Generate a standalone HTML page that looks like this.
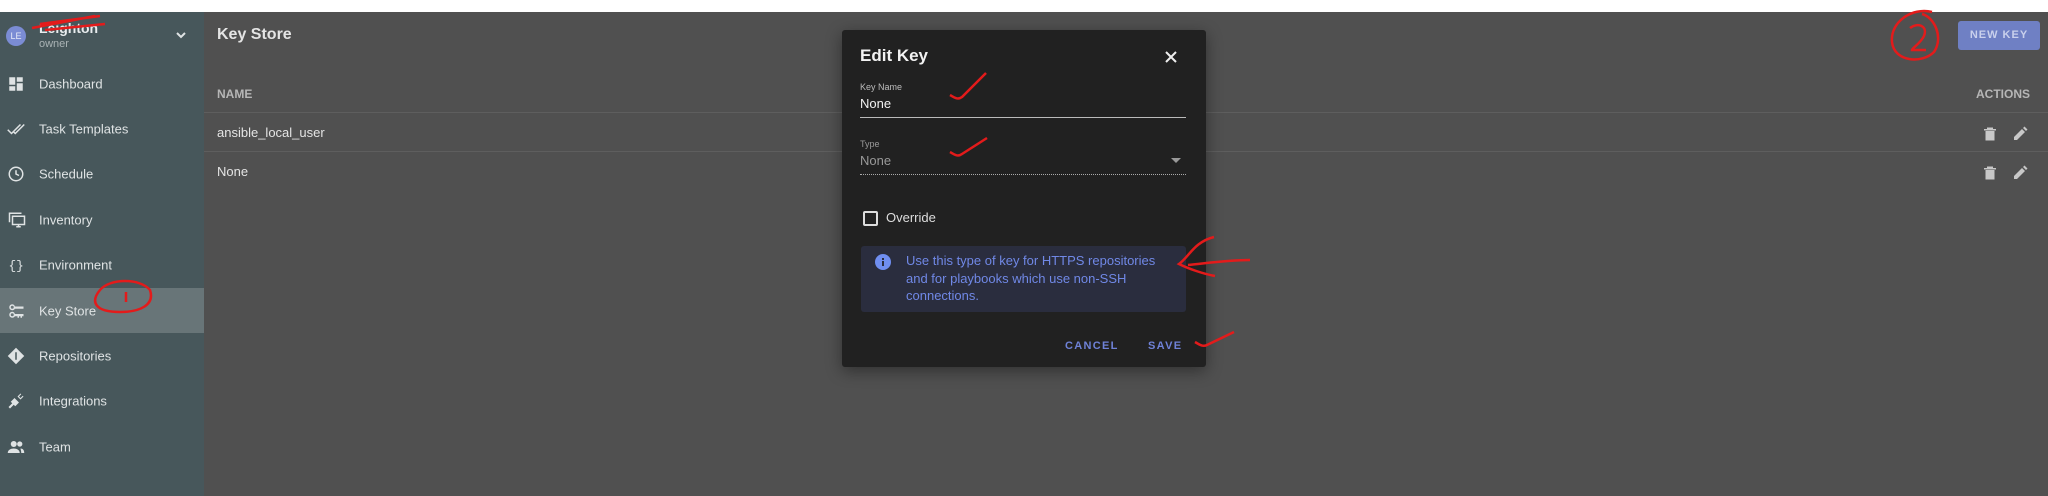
<!DOCTYPE html>
<html><head><meta charset="utf-8"><style>
*{margin:0;padding:0;box-sizing:border-box}
body{width:2048px;height:496px;overflow:hidden;background:#fff;font-family:"Liberation Sans",sans-serif;position:relative}
.abs{position:absolute}
#side{left:0;top:12px;width:204px;height:484px;background:#47575b}
#main{left:204px;top:12px;width:1844px;height:484px;background:#505050}
.item{position:absolute;left:0;width:204px;height:45px;color:#dfe3e4;font-size:13px}
.item span{position:absolute;left:39px;top:50%;transform:translateY(-50%)}
.item svg{position:absolute;left:7px;top:50%;transform:translateY(-50%)}
.t{position:absolute;white-space:nowrap}
</style></head><body>
<div id="side" class="abs"></div>
<div id="main" class="abs"></div>
<div class="abs" style="left:0;top:288px;width:204px;height:45px;background:#687578"></div>
<div class="abs" style="left:6px;top:26px;width:20px;height:20px;border-radius:50%;background:#7b8cd4;color:#e5e9f7;font-size:9px;line-height:20px;text-align:center">LE</div>
<div class="t" style="left:39px;top:20px;color:#e8ecee;font-size:14px;font-weight:bold">Leighton</div>
<div class="t" style="left:39px;top:38px;color:#aab3b5;font-size:11px">owner</div>
<svg class="abs" style="left:175px;top:29px" width="12" height="12"><path d="M2 4l4 4 4-4" stroke="#dfe3e4" stroke-width="2" fill="none"/></svg>
<div class="item" style="top:61px"><svg width="18" height="18" viewBox="0 0 24 24"><path fill="#dfe3e4" d="M3 13h8V3H3zm0 8h8v-6H3zm10 0h8V11h-8zm0-18v6h8V3z"/></svg><span>Dashboard</span></div>
<div class="item" style="top:106px"><svg width="18" height="18" viewBox="0 0 24 24"><path fill="none" stroke="#dfe3e4" stroke-width="2" d="M1 13l5 5L18 6M9 16l2 2L23 6"/></svg><span>Task Templates</span></div>
<div class="item" style="top:151px"><svg width="18" height="18" viewBox="0 0 24 24"><circle cx="12" cy="12" r="9" stroke="#dfe3e4" stroke-width="2" fill="none"/><path d="M12 7v5l4 2" stroke="#dfe3e4" stroke-width="2" fill="none"/></svg><span>Schedule</span></div>
<div class="item" style="top:197px"><svg width="20" height="18" viewBox="0 0 24 24"><path fill="none" stroke="#dfe3e4" stroke-width="2" d="M2 15V3h16M6 7h16v11H6zM11 21h6M14 18v3"/></svg><span>Inventory</span></div>
<div class="item" style="top:242px"><svg width="18" height="18" viewBox="0 0 24 24"><text x="2" y="18" fill="#dfe3e4" font-size="17" font-family="Liberation Mono">{}</text></svg><span>Environment</span></div>
<div class="item" style="top:288px"><svg width="18" height="18" viewBox="0 0 24 24"><path fill="#dfe3e4" d="M7 3a4 4 0 1 0 0 8 4 4 0 0 0 3.5-2H22V6H10.5A4 4 0 0 0 7 3zm0 2a2 2 0 1 1 0 4 2 2 0 0 1 0-4zM7 13a4 4 0 1 0 0 8 4 4 0 0 0 3.5-2H14v2h2v-2h2v2h2v-2h2v-3H10.5A4 4 0 0 0 7 13zm0 2a2 2 0 1 1 0 4 2 2 0 0 1 0-4z"/></svg><span>Key Store</span></div>
<div class="item" style="top:333px"><svg width="18" height="18" viewBox="0 0 24 24"><path fill="#dfe3e4" d="M12 1l11 11-11 11L1 12zM11 7v10h2V7z"/></svg><span>Repositories</span></div>
<div class="item" style="top:378px"><svg width="18" height="18" viewBox="0 0 24 24"><path fill="#dfe3e4" d="M2 20l5-5-2-2 5-5 6 6-5 5-2-2-5 5zM14 6l4-4 1 1-3 3 2 2 3-3 1 1-4 4z"/></svg><span>Integrations</span></div>
<div class="item" style="top:424px"><svg width="18" height="18" viewBox="0 0 24 24"><circle cx="9" cy="8" r="4" fill="#dfe3e4"/><circle cx="17" cy="8" r="3.5" fill="#dfe3e4"/><path fill="#dfe3e4" d="M1 20c0-4 4-6 8-6s8 2 8 6zM18 14c3 0 5 2 5 6h-4c0-3-1-5-1-6z"/></svg><span>Team</span></div>
<div class="t" style="left:217px;top:26px;color:#e4e4e4;font-size:16px;font-weight:bold">Key Store</div>
<div class="abs" style="left:1958px;top:21px;width:82px;height:29px;background:#6f80c4;border-radius:3px;color:#c9d0ec;font-size:11px;font-weight:bold;letter-spacing:1px;text-align:center;line-height:29px">NEW KEY</div>
<div class="t" style="left:217px;top:87px;color:#b6b6b6;font-size:12px;font-weight:bold">NAME</div>
<div class="t" style="right:18px;top:87px;color:#b6b6b6;font-size:12px;font-weight:bold">ACTIONS</div>
<div class="abs" style="left:204px;top:112px;width:1844px;height:1px;background:#5e5e5e"></div>
<div class="abs" style="left:204px;top:151px;width:1844px;height:1px;background:#5e5e5e"></div>
<div class="t" style="left:217px;top:125px;color:#e4e4e4;font-size:13px">ansible_local_user</div>
<div class="t" style="left:217px;top:164px;color:#e4e4e4;font-size:13px">None</div>
<svg class="abs" style="left:1982px;top:125px" width="50" height="16" viewBox="0 0 50 16"><path fill="#c8c8c8" d="M2 4h12v1.5H2zM5 2.5h6V4H5zM3.5 6h9v9.5h-9z"/><path fill="#c8c8c8" d="M32 12l8-8 3 3-8 8h-3zM41 3l1.5-1.5 3 3L44 6z"/></svg>
<svg class="abs" style="left:1982px;top:164px" width="50" height="16" viewBox="0 0 50 16"><path fill="#c8c8c8" d="M2 4h12v1.5H2zM5 2.5h6V4H5zM3.5 6h9v9.5h-9z"/><path fill="#c8c8c8" d="M32 12l8-8 3 3-8 8h-3zM41 3l1.5-1.5 3 3L44 6z"/></svg>
<div class="abs" style="left:842px;top:30px;width:364px;height:337px;background:#212121;border-radius:3px;box-shadow:0 4px 16px rgba(0,0,0,.4)"></div>
<div class="t" style="left:860px;top:46px;color:#f2f2f2;font-size:17px;font-weight:bold">Edit Key</div>
<svg class="abs" style="left:1164px;top:50px" width="14" height="14"><path d="M2 2l10 10M12 2L2 12" stroke="#eee" stroke-width="2"/></svg>
<div class="t" style="left:860px;top:82px;color:#bbb;font-size:9px">Key Name</div>
<div class="t" style="left:860px;top:96px;color:#f2f2f2;font-size:13px">None</div>
<div class="abs" style="left:860px;top:117px;width:326px;height:1px;background:#bbb"></div>
<div class="t" style="left:860px;top:139px;color:#999;font-size:9px">Type</div>
<div class="t" style="left:860px;top:153px;color:#999;font-size:13px">None</div>
<svg class="abs" style="left:1171px;top:158px" width="10" height="6"><path d="M0 0h10L5 5z" fill="#999"/></svg>
<div class="abs" style="left:860px;top:174px;width:326px;height:0;border-top:1px dotted #aaa"></div>
<div class="abs" style="left:863px;top:211px;width:15px;height:15px;border:2px solid #ddd;border-radius:2px"></div>
<div class="t" style="left:886px;top:210px;color:#ddd;font-size:13px">Override</div>
<div class="abs" style="left:861px;top:246px;width:325px;height:66px;background:#2a2d3e;border-radius:3px"></div>
<svg class="abs" style="left:875px;top:254px" width="16" height="16"><circle cx="8" cy="8" r="8" fill="#6f8ef0"/><rect x="7" y="7" width="2" height="5" fill="#2a2d3e"/><rect x="7" y="4" width="2" height="2" fill="#2a2d3e"/></svg>
<div class="t" style="left:906px;top:252px;color:#7088e6;font-size:13px;line-height:17.5px">Use this type of key for HTTPS repositories<br>and for playbooks which use non-SSH<br>connections.</div>
<div class="t" style="left:1065px;top:340px;color:#6f82d8;font-size:11px;font-weight:bold;letter-spacing:1.3px">CANCEL</div>
<div class="t" style="left:1148px;top:340px;color:#6f82d8;font-size:11px;font-weight:bold;letter-spacing:1.3px">SAVE</div>
<svg class="abs" style="left:0;top:0" width="2048" height="496" fill="none" stroke="#e31b1b" stroke-width="2.5">
<path d="M32 28L95 16M40 24l60-8M45 30l60-6"/>
<path d="M100 290c10-12 40-12 50 0 5 15-10 22-30 22-25 0-30-10-20-22M126 292v10"/>
<path d="M1932 12c-20-5-42 10-40 30 2 20 30 22 42 10 10-15 0-35-12-38M1910 28c8-6 18-2 14 8-4 8-12 12-12 14h14"/>
<path d="M950 95c5 3 8 5 12 2l24-24M950 152c5 3 8 5 12 2l25-16M1214 237c-20 5-25 20-35 27 10 5 25 10 36 12M1188 265c20-2 40-5 62-5M1195 342c5 3 8 5 12 3l27-13"/>
</svg>
</body></html>
